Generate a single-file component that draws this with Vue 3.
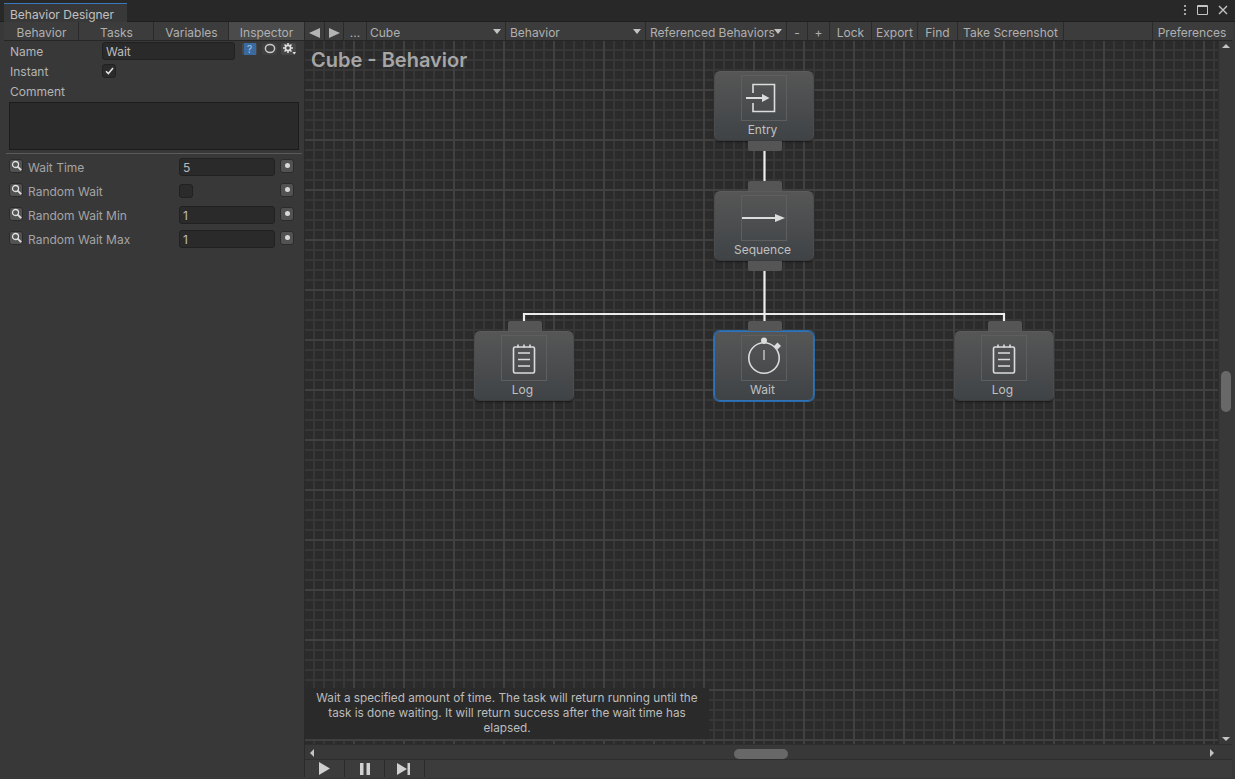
<template>
  <div class="window">
    <!-- Title bar -->
    <div class="titlebar">
      <div class="title-tab">Behavior Designer</div>
      <div class="title-actions">
        <svg width="4" height="12" viewBox="0 0 4 12"><circle cx="2" cy="2" r="1.1" /><circle cx="2" cy="6" r="1.1" /><circle cx="2" cy="10" r="1.1" /></svg>
        <svg width="11" height="10" viewBox="0 0 11 10"><path d="M.5 .5h10v9H.5z M.5 1.5h10" fill="none" stroke="#c4c4c4" /></svg>
        <svg width="10" height="10" viewBox="0 0 10 10"><path d="M1 1l8 8M9 1l-8 8" fill="none" stroke="#c4c4c4" stroke-width="1.4" /></svg>
      </div>
    </div>

    <!-- Toolbar -->
    <div class="toolbar">
      <button
        v-for="tab in tabs"
        :key="tab"
        class="tool tab"
        :class="{ active: tab === 'Inspector' }"
      >{{ tab }}</button>
      <div class="gutter"></div>
      <button class="tool w20"><svg width="11" height="10" viewBox="0 0 11 10"><path d="M0 5l11-5v10z" /></svg></button>
      <button class="tool w19"><svg width="11" height="10" viewBox="0 0 11 10"><path d="M11 5L0 0v10z" /></svg></button>
      <button class="tool w23">...</button>
      <button class="tool drop w139 tight">Cube<i class="caret"></i></button>
      <button class="tool drop w140">Behavior<i class="caret"></i></button>
      <button class="tool drop w141">Referenced Behaviors<i class="caret"></i></button>
      <button class="tool w21">-</button>
      <button class="tool w22">+</button>
      <button class="tool w42">Lock</button>
      <button class="tool w46">Export</button>
      <button class="tool w40">Find</button>
      <button class="tool w106">Take Screenshot</button>
      <div class="tool spacer"></div>
      <button class="tool w80">Preferences</button>
    </div>

    <div class="main">
      <!-- Inspector panel -->
      <aside class="inspector">
        <div class="field-row">
          <label>Name</label>
          <div class="input name-input">Wait</div>
          <div class="name-icons">
            <span class="icon-btn"><span class="help-icon">?</span></span>
            <span class="icon-btn plain">
              <svg width="12" height="11" viewBox="0 0 12 11"><ellipse cx="6" cy="5.5" rx="4.6" ry="4" fill="none" stroke="#c8c8c8" stroke-width="1.5" /></svg>
            </span>
            <span class="icon-btn gear">
              <svg width="14" height="12" viewBox="0 0 14 12">
                <circle cx="6" cy="5" r="2.6" fill="none" stroke="#e0e0e0" stroke-width="1.6" />
                <path d="M6 0v2M6 8v2M1 5h2M9 5h2M2.5 1.5l1.4 1.4M8.1 7.1l1.4 1.4M9.5 1.5L8.1 2.9M3.9 7.1L2.5 8.5" stroke="#e0e0e0" stroke-width="1.5" />
                <path d="M10.5 9h3.5l-1.75 2.5z" fill="#e0e0e0" />
              </svg>
            </span>
          </div>
        </div>
        <div class="field-row">
          <label>Instant</label>
          <div class="checkbox">
            <svg width="9" height="8" viewBox="0 0 9 8"><path d="M1 4.2l2.4 2.4L8 1" fill="none" stroke="#e4e4e4" stroke-width="1.5" /></svg>
          </div>
        </div>
        <div class="field-row"><label>Comment</label></div>
        <div class="comment"></div>
        <div class="divider"></div>

        <div v-for="row in variables" :key="row.label" class="var-row">
          <span class="mini-btn">
            <svg width="11" height="11" viewBox="0 0 11 11"><circle cx="4.5" cy="4.5" r="3" fill="none" stroke="#e2e2e2" stroke-width="1.3" /><path d="M6.8 6.8l3.4 3.4" stroke="#e2e2e2" stroke-width="1.8" /></svg>
          </span>
          <span class="var-label">{{ row.label }}</span>
          <div class="var-value">
            <div v-if="row.value !== null" class="input var-input">{{ row.value }}</div>
            <div v-else class="checkbox"></div>
          </div>
          <span class="mini-btn dot"><i></i></span>
        </div>
      </aside>

      <!-- Graph area -->
      <div class="graph">
        <div class="graph-top">
          <div class="canvas">
            <div class="canvas-title">Cube - Behavior</div>

            <svg class="wires" width="914" height="704" viewBox="305 41 914 704">
              <path d="M764.5 151V181M764.5 271V321M524 321V314H1004V321" fill="none" stroke="#ececec" stroke-width="2.2" />
            </svg>

            <div
              v-for="node in nodes"
              :key="node.id"
              class="node"
              :class="{ selected: node.selected }"
              :style="{ left: node.x - 305 + 'px', top: node.y - 41 + 'px' }"
            >
              <i v-if="node.input" class="port in"></i>
              <i v-if="node.output" class="port out"></i>
              <div class="node-icon">
                <svg width="46" height="46" viewBox="0 0 46 46" fill="none" stroke="#dcdcdc" stroke-width="1.6">
                  <template v-if="node.icon === 'entry'">
                    <path d="M12 18V9.5h21.5v27H12V28" />
                    <path d="M5 23h18" stroke-width="2" />
                    <path d="M21 19l7.5 4-7.5 4z" fill="#dcdcdc" stroke="none" />
                  </template>
                  <template v-else-if="node.icon === 'sequence'">
                    <path d="M1 23h35" stroke-width="1.8" />
                    <path d="M34 19l10 4-10 4z" fill="#dcdcdc" stroke="none" />
                  </template>
                  <template v-else-if="node.icon === 'log'">
                    <rect x="12.5" y="12" width="21" height="26" rx="1.5" />
                    <path d="M17 9.5v3M23 9.5v3M29 9.5v3M17 18h12M17 24.5h12M17 31h12" />
                  </template>
                  <template v-else>
                    <circle cx="23" cy="23" r="15.2" />
                    <path d="M23 15v10" stroke-width="1.2" />
                    <circle cx="23" cy="5.5" r="3" fill="#dcdcdc" stroke="none" />
                    <path d="M23 7v2M33.5 12.5l2-2" />
                    <path d="M36.5 7.5l3.5 3.5-3.5 3.5-3.5-3.5z" fill="#dcdcdc" stroke="none" />
                  </template>
                </svg>
              </div>
              <div class="node-label">{{ node.label }}</div>
            </div>

            <div class="description">
              Wait a specified amount of time. The task will return running until the task is done waiting. It will return success after the wait time has elapsed.
            </div>
          </div>

          <!-- Vertical scrollbar -->
          <div class="vscroll">
            <i class="arrow up"></i>
            <i class="vthumb"></i>
            <i class="arrow down"></i>
          </div>
        </div>

        <!-- Horizontal scrollbar -->
        <div class="hscroll">
          <i class="arrow left-arrow"></i>
          <i class="hthumb"></i>
          <i class="arrow right-arrow"></i>
        </div>

        <!-- Playback controls -->
        <div class="playbar">
          <button class="play-btn"><svg width="13" height="13" viewBox="0 0 13 13"><path d="M1 0l11 6.5L1 13z" /></svg></button>
          <button class="play-btn"><svg width="10" height="12" viewBox="0 0 10 12"><path d="M0 0h3.5v12H0zM6.5 0H10v12H6.5z" /></svg></button>
          <button class="play-btn next"><svg width="13" height="12" viewBox="0 0 13 12"><path d="M0 0l10 6-10 6zM10.5 0H13v12h-2.5z" /></svg></button>
        </div>
      </div>
    </div>
  </div>
</template>

<script setup>
const tabs = ['Behavior', 'Tasks', 'Variables', 'Inspector']

const variables = [
  { label: 'Wait Time', value: '5' },
  { label: 'Random Wait', value: null },
  { label: 'Random Wait Min', value: '1' },
  { label: 'Random Wait Max', value: '1' },
]

const nodes = [
  { id: 1, label: 'Entry', icon: 'entry', x: 714, y: 71, output: true },
  { id: 2, label: 'Sequence', icon: 'sequence', x: 714, y: 191, input: true, output: true },
  { id: 3, label: 'Log', icon: 'log', x: 474, y: 331, input: true },
  { id: 4, label: 'Wait', icon: 'wait', x: 714, y: 331, input: true, selected: true },
  { id: 5, label: 'Log', icon: 'log', x: 954, y: 331, input: true },
]
</script>

<style>
html,
body {
  margin: 0;
  background: #383838;
}
</style>

<style scoped>
.window {
  width: 1235px;
  height: 779px;
  box-sizing: border-box;
  padding: 0 3px 2px 4px;
  display: flex;
  flex-direction: column;
  overflow: hidden;
  background: #383838;
  font-family: Inter, "Liberation Sans", sans-serif;
  font-size: 12px;
  color: #b4b4b4;
}

/* Title bar */
.titlebar {
  height: 22px;
  margin: 0 -3px 0 -4px;
  padding: 3px 3px 0 4px;
  box-sizing: border-box;
  flex: none;
  display: flex;
  justify-content: space-between;
  background: #282828;
  border-bottom: 1px solid #1f1f1f;
}

.title-tab {
  width: 123px;
  height: 19px;
  margin-bottom: -1px;
  padding-left: 6px;
  box-sizing: border-box;
  line-height: 21px;
  color: #c0c0c0;
  background: #383838;
  border-top: 1px solid #3a79bb;
}

.title-actions {
  display: flex;
  align-items: center;
  gap: 10px;
  padding: 0 4px 4px 0;
}

.title-actions svg {
  fill: #c4c4c4;
}

/* Toolbar */
.toolbar {
  height: 19px;
  flex: none;
  display: flex;
  background: #3c3c3c;
  border-bottom: 1px solid #262626;
  box-sizing: border-box;
}

.tool {
  height: 18px;
  padding: 0;
  border: 0;
  border-right: 1px solid #2a2a2a;
  background: #3c3c3c;
  color: #b0b0b0;
  font: inherit;
  line-height: 22px;
  white-space: nowrap;
  overflow: hidden;
  position: relative;
  flex: none;
}

.tool svg {
  fill: #b4b4b4;
  vertical-align: -1px;
}

.tab {
  width: 75px;
  padding-left: 1px;
}

.tab.active {
  background: #4b4b4b;
  border-right-color: #4b4b4b;
}

.gutter {
  width: 1px;
  background: #2a2a2a;
  flex: none;
}

.drop {
  text-align: left;
  padding-left: 4px;
  box-sizing: border-box;
}

.drop.tight {
  padding-left: 3px;
}

.caret {
  position: absolute;
  right: 4px;
  top: 7px;
  border-left: 4px solid transparent;
  border-right: 4px solid transparent;
  border-top: 5px solid #c4c4c4;
}

.w19 { width: 19px; }
.w20 { width: 20px; }
.w21 { width: 21px; }
.w22 { width: 22px; }
.w23 { width: 23px; }
.w40 { width: 40px; }
.w42 { width: 42px; }
.w46 { width: 46px; }
.w80 { width: 80px; border-right: 0; padding-right: 2px; }
.w106 { width: 106px; }
.w139 { width: 139px; }
.w140 { width: 140px; }
.w141 { width: 141px; }

.spacer {
  width: 88px;
}

/* Inspector */
.main {
  flex: 1;
  display: flex;
  min-height: 0;
}

.inspector {
  width: 301px;
  flex: none;
  box-sizing: border-box;
  background: #383838;
  border-right: 1px solid #2a2a2a;
}

.field-row {
  height: 20px;
  display: flex;
  align-items: center;
  padding-left: 6px;
}

.field-row label {
  width: 92px;
  flex: none;
}

.input {
  box-sizing: border-box;
  height: 18px;
  line-height: 18px;
  padding-left: 3px;
  background: #2a2a2a;
  border: 1px solid #212121;
  border-radius: 3px;
  color: #bcbcbc;
}

.name-input {
  width: 133px;
}

.name-icons {
  display: flex;
  align-items: center;
  gap: 5px;
  margin-left: 7px;
  margin-bottom: 5px;
}

.icon-btn {
  width: 15px;
  height: 12px;
  display: flex;
  align-items: center;
  justify-content: center;
  background: #474747;
  border-radius: 2px;
}

.icon-btn.plain {
  background: #3f3f3f;
}

.icon-btn.gear {
  margin-left: -1px;
}

.help-icon {
  width: 12px;
  height: 12px;
  line-height: 12px;
  text-align: center;
  font-size: 10px;
  color: #a7c4e6;
  background: #3b6a9e;
  box-sizing: border-box;
}

.checkbox {
  width: 14px;
  height: 14px;
  display: flex;
  align-items: center;
  justify-content: center;
  box-sizing: border-box;
  background: #2b2b2b;
  border: 1px solid #212121;
  border-radius: 3px;
}

.comment {
  height: 48px;
  margin: 1px 5px 0;
  background: #2a2a2a;
  border: 1px solid #1c1c1c;
  box-sizing: border-box;
}

.divider {
  height: 1px;
  width: 296px;
  margin: 3px 0 1px 2px;
  background: #5a5a5a;
}

.var-row {
  height: 24px;
  display: flex;
  align-items: center;
  padding-left: 5px;
}

.mini-btn {
  width: 14px;
  height: 14px;
  display: flex;
  align-items: center;
  justify-content: center;
  flex: none;
  margin-top: -3px;
  box-sizing: border-box;
  background: #525252;
  border: 1px solid #2b2b2b;
  border-radius: 3px;
}

.var-label {
  width: 151px;
  margin-left: 5px;
  flex: none;
  color: #a4a4a4;
}

.var-value {
  width: 101px;
  flex: none;
}

.var-input {
  width: 96px;
}

.dot i {
  width: 5px;
  height: 5px;
  border-radius: 50%;
  background: #d8d8d8;
}

/* Graph */
.graph {
  flex: 1;
  min-width: 0;
  display: flex;
  flex-direction: column;
}

.graph-top {
  flex: 1;
  display: flex;
  min-height: 0;
}

.canvas {
  flex: 1;
  position: relative;
  overflow: hidden;
  background-color: #2b2b2b;
  background-image:
    linear-gradient(90deg, #414141 2px, transparent 2px),
    linear-gradient(#414141 2px, transparent 2px),
    linear-gradient(90deg, #373737 2px, transparent 2px),
    linear-gradient(#373737 2px, transparent 2px);
  background-size: 50px 100%, 100% 50px, 10px 100%, 100% 10px;
  background-position: 48px 0, 0 48px, 8px 0, 0 8px;
}

.canvas-title {
  position: absolute;
  left: 6px;
  top: 7px;
  font-size: 20px;
  font-weight: 600;
  color: #a6a6a6;
}

.wires {
  position: absolute;
  left: 0;
  top: 0;
}

.node {
  position: absolute;
  width: 100px;
  height: 70px;
  box-sizing: border-box;
  border-radius: 6px;
  background: linear-gradient(#565656, #3f4346);
  border: 1px solid;
  border-color: #5c5c5c #4c4c4c #3a3c3e;
  box-shadow: 0 1px 2px rgba(0, 0, 0, 0.5);
}

.node.selected {
  border-color: #2f74b8;
  box-shadow: 0 0 0 1px #2a6aa8;
}

.port {
  position: absolute;
  left: 33px;
  width: 34px;
  height: 10px;
  background: #555;
}

.port.in {
  top: -11px;
  border-radius: 2px 2px 0 0;
}

.port.out {
  bottom: -11px;
  border-radius: 0 0 2px 2px;
}

.node-icon {
  width: 44px;
  height: 44px;
  margin: 3px 0 0 26px;
  border: 1px solid #5e5e5e;
}

.node-icon svg {
  display: block;
  margin: -1px;
}

.node-label {
  margin-top: 1px;
  padding-right: 3px;
  text-align: center;
  line-height: 16px;
  color: #c0c0c0;
}

.description {
  position: absolute;
  left: 0;
  bottom: 4px;
  width: 404px;
  height: 52px;
  box-sizing: border-box;
  padding: 3px 4px;
  text-align: center;
  font-size: 11.75px;
  line-height: 15px;
  color: #bcbcbc;
  background: #2a2a2a;
  border-bottom: 1px solid #3e3e3e;
}

.vscroll {
  width: 13px;
  flex: none;
  position: relative;
  background: #383838;
  border-left: 1px solid #2e2e2e;
}

.vthumb {
  position: absolute;
  left: 2px;
  top: 330px;
  width: 10px;
  height: 41px;
  border-radius: 5px;
  background: #686868;
}

.hscroll {
  height: 14px;
  flex: none;
  position: relative;
  background: #383838;
  border-top: 1px solid #2e2e2e;
}

.hthumb {
  position: absolute;
  left: 429px;
  top: 4px;
  width: 54px;
  height: 10px;
  border-radius: 5px;
  background: #686868;
}

.arrow {
  position: absolute;
  width: 0;
  height: 0;
}

.up {
  left: 3px;
  top: 3px;
  border-left: 4px solid transparent;
  border-right: 4px solid transparent;
  border-bottom: 4px solid #c4c4c4;
}

.down {
  left: 3px;
  bottom: 3px;
  border-left: 4px solid transparent;
  border-right: 4px solid transparent;
  border-top: 4px solid #c4c4c4;
}

.left-arrow {
  left: 5px;
  top: 4px;
  border-top: 4px solid transparent;
  border-bottom: 4px solid transparent;
  border-right: 4px solid #c4c4c4;
}

.right-arrow {
  left: 905px;
  top: 4px;
  border-top: 4px solid transparent;
  border-bottom: 4px solid transparent;
  border-left: 4px solid #c4c4c4;
}

.playbar {
  height: 17px;
  flex: none;
  display: flex;
  background: #3c3c3c;
  border-top: 1px solid #2e2e2e;
}

.play-btn {
  width: 40px;
  height: 17px;
  padding: 0;
  border: 0;
  border-right: 1px solid #2a2a2a;
  background: #3c3c3c;
  display: flex;
  align-items: center;
  justify-content: center;
}

.play-btn.next {
  padding-right: 2px;
}

.play-btn svg {
  fill: #d0d0d0;
}
</style>
